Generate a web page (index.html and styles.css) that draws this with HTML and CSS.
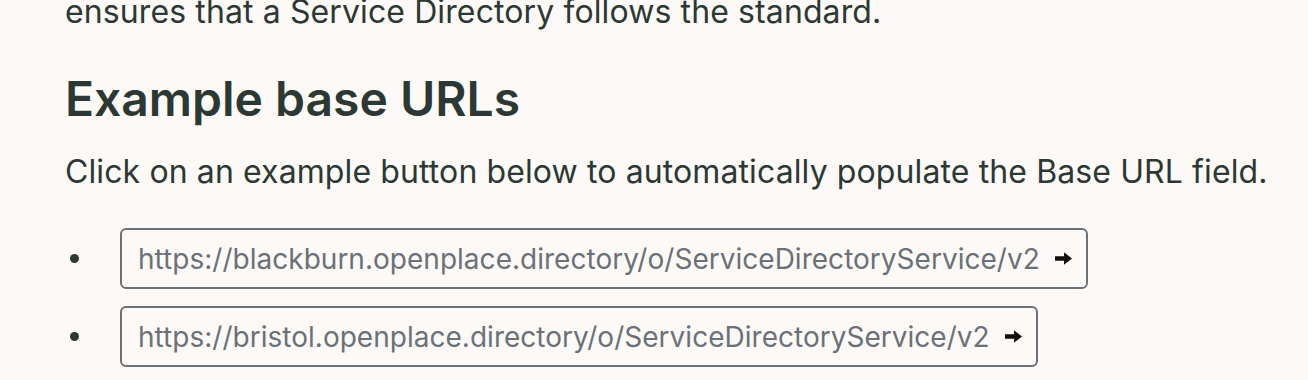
FILE: index.html
```html
<!DOCTYPE html>
<html>
<head>
<meta charset="utf-8">
<link rel="stylesheet" href="styles.css">
</head>
<body>
<main class="content">
  <p class="lead">ensures that a Service Directory follows the standard.</p>
  <h2 class="heading">Example base URLs</h2>
  <p class="text">Click on an example button below to automatically populate the Base URL field.</p>
  <ul class="examples">
    <li class="example">
      <button class="url-btn" type="button"><span>https://blackburn.openplace.directory/o/ServiceDirectoryService/v2</span>
        <svg class="arrow" width="17" height="13" viewBox="0 0 17 13"><path d="M0 4.3H9V0.3L17 6.5L9 12.7V8.7H0Z" fill="#111"/></svg>
      </button>
    </li>
    <li class="example">
      <button class="url-btn" type="button"><span>https://bristol.openplace.directory/o/ServiceDirectoryService/v2</span>
        <svg class="arrow" width="17" height="13" viewBox="0 0 17 13"><path d="M0 4.3H9V0.3L17 6.5L9 12.7V8.7H0Z" fill="#111"/></svg>
      </button>
    </li>
  </ul>
</main>
</body>
</html>
```

FILE: styles.css
```css
html, body {
  margin: 0;
  padding: 0;
  background: #fcf9f6;
}
body {
  font-family: Inter, "Noto Sans", sans-serif;
  color: #2c3833;
  overflow: hidden;
}
.content {
  padding-left: 65px;
  margin-top: -12px;
}
.lead, .text {
  font-size: 32px;
  line-height: 48px;
  letter-spacing: 0.11px;
  margin: 0;
}
.heading {
  font-size: 48px;
  font-weight: 600;
  line-height: 58px;
  margin: 34px 0 20px;
}
.examples {
  margin: 32px 0 0;
  padding: 0;
  list-style: none;
}
.example {
  display: flex;
  align-items: center;
  margin-bottom: 17px;
}
.example::before {
  content: "";
  width: 9px;
  height: 9px;
  border-radius: 50%;
  background: #2c3833;
  margin-left: 5px;
  margin-right: 41px;
  flex: none;
}
.url-btn {
  display: flex;
  align-items: center;
  gap: 15px;
  box-sizing: border-box;
  height: 61px;
  padding: 0 14px 0 16px;
  border: 2px solid #6b7178;
  border-radius: 6px;
  background: transparent;
  color: #6b7178;
  font-family: Inter, "Noto Sans", sans-serif;
  font-size: 28px;
  letter-spacing: 0.02px;
  cursor: pointer;
}
.arrow {
  display: block;
  flex: none;
}
```
